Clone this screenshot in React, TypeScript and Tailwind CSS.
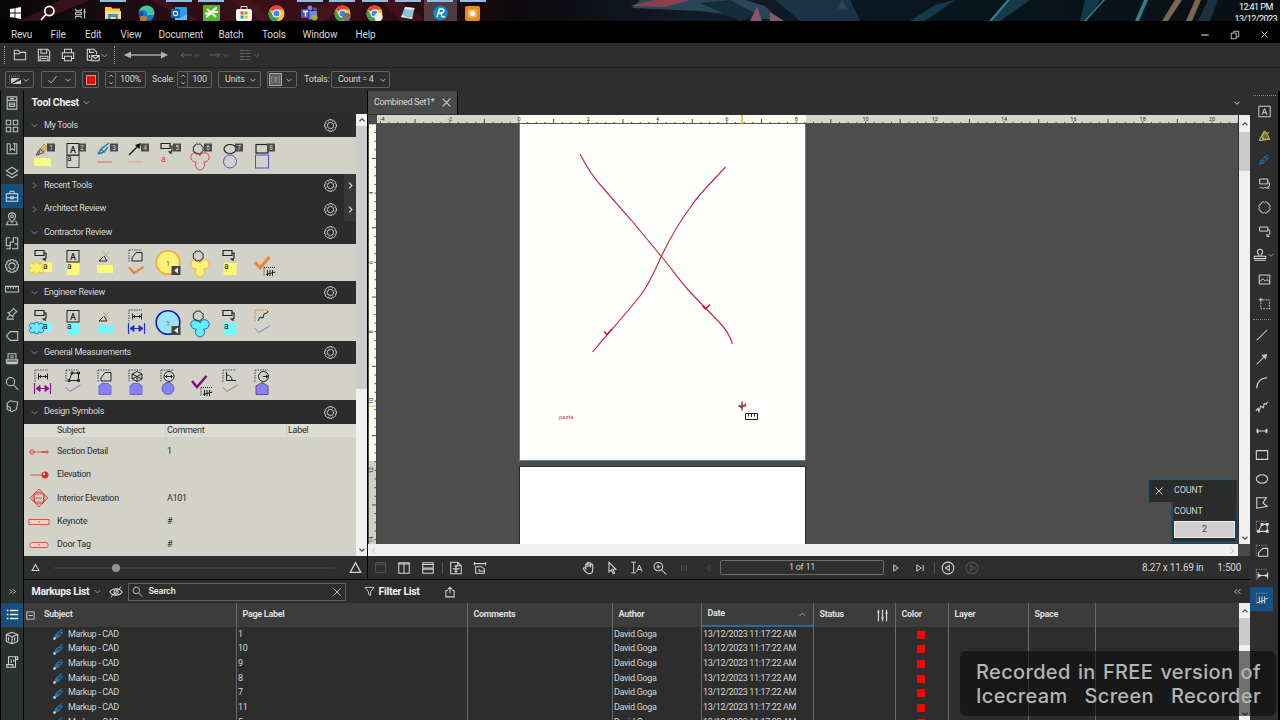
import type { ReactNode } from "react";

type IconProps = { d: string; s?: number; w?: number; c?: string; children?: ReactNode };

function Ic({ d, s = 14, w = 1.2, c = "text-[#d4d4d4]", children }: IconProps) {
  return (
    <svg width={s} height={s} viewBox="0 0 16 16" fill="none" stroke="currentColor" strokeWidth={w} className={`shrink-0 ${c}`}>
      <path d={d} />
      {children}
    </svg>
  );
}

/* Closed ring of n outward bumps around a centre. */
function scallop(cx: number, cy: number, rx: number, ry: number, n: number, bump: number, large = 0, turn = -90) {
  const p = Array.from({ length: n + 1 }, (_, i) => {
    const a = ((turn + (i * 360) / n) * Math.PI) / 180;
    return `${(cx + rx * Math.cos(a)).toFixed(2)} ${(cy + ry * Math.sin(a)).toFixed(2)}`;
  });
  return `M${p[0]}` + p.slice(1).map((q) => `A${bump} ${bump} 0 ${large} 1 ${q}`).join("") + "Z";
}

function gearPath() {
  const n = 8;
  const pts: string[] = [];
  for (let i = 0; i < n; i++) {
    [[-14, 7.4], [14, 7.4], [20, 6.2], [25, 6.2]].forEach(([o, r]) => {
      const a = (((i * 360) / n + o - 90) * Math.PI) / 180;
      pts.push(`${(8 + r * Math.cos(a)).toFixed(2)} ${(8 + r * Math.sin(a)).toFixed(2)}`);
    });
  }
  return "M" + pts.join("L") + "Z";
}

const DOWN = "M3 5.5 8 10.5 13 5.5";
const UP = "M3 10.5 8 5.5 13 10.5";
const RIGHT = "M5.5 3 10.5 8 5.5 13";
const CROSS = "M2.5 2.5 13.5 13.5M13.5 2.5 2.5 13.5";
const PEN = "M2 14 4 8.5 12 2M2 14 7.5 12 13 5M4 8.5 7.5 12M2 14 8 8M9 5 11.5 7.5";

/* ---------- Taskbar ---------- */

function Chrome({ badge }: { badge?: string }) {
  return (
    <svg width="17" height="17" viewBox="0 0 17 17">
      <circle cx="8.5" cy="8.5" r="8" fill="#f7c52d" />
      <path d="M8.5 8.5 1.6 4.5A8 8 0 0 1 15.4 4.5H8.5Z" fill="#e2463a" />
      <path d="M1.6 4.5A8 8 0 0 0 8.5 16.5L12 10.5 8.5 8.5 5 10.5Z" fill="#35a353" />
      <circle cx="8.5" cy="8.5" r="4" fill="#fff" />
      <circle cx="8.5" cy="8.5" r="3" fill="#4285f4" />
      {badge && <circle cx="12.5" cy="12" r="4.2" fill={badge} />}
    </svg>
  );
}

const taskIcons: { el: ReactNode; on?: boolean; active?: boolean }[] = [
  { el: <svg width="11" height="12" viewBox="0 0 11 12" fill="#fff"><path d="M0 2 4.6 1.2V5.6H0ZM5.4 1 11 0V5.6H5.4ZM0 6.4H4.6V10.8L0 10ZM5.4 6.4H11V12L5.4 11Z" /></svg> },
  { el: <Ic d="M14 6A4.6 4.6 0 1 1 4.8 6 4.6 4.6 0 0 1 14 6ZM6 9.5 1 15" s={16} w={1.7} c="text-white" /> },
  { el: <Ic d="M2 2V4.5H9V2M2 14V11.5H9V14M2 6.5H9V9.5H2ZM13 2V14M11.5 6H14.5" s={13} c="text-[#d8d8d8]" /> },
  { on: true, el: <svg width="16" height="14" viewBox="0 0 16 14"><path d="M0 1H6L7.5 2.5H15V13H0Z" fill="#f5c542" /><path d="M0 5H16V13H0Z" fill="#fbdc7c" /><path d="M3 8H13V13H10.5V11H5.5V13H3Z" fill="#3d93d8" /></svg> },
  { el: <svg width="17" height="17" viewBox="0 0 17 17"><circle cx="8.5" cy="8.5" r="8" fill="#1976c8" /><path d="M1 7C2 1 8 0 11 1 16 2.500 17 7 16 10H9C10 8 8 5 5 5 3 5 1.500 6 1 7Z" fill="#3fc7a0" /><path d="M5 8C4 12 7 16 12 15.500 8 18 1 16 1 9 2 6 4.500 6 5 8Z" fill="#134a9c" /><rect x="2" y="11" width="7" height="5" rx="1" fill="#b3793a" /></svg> },
  { on: true, el: <svg width="16" height="15" viewBox="0 0 16 15"><rect x="4" y="1" width="12" height="13" rx="1" fill="#2f9be8" /><path d="M4 8 10 12 16 8V14H4Z" fill="#5fc1f5" /><rect y="3" width="9" height="9" rx="1" fill="#0f62b5" /><circle cx="4.500" cy="7.500" r="2.200" fill="none" stroke="#fff" strokeWidth="1.200" /></svg> },
  { on: true, el: <svg width="17" height="16" viewBox="0 0 17 16"><rect width="17" height="16" rx="1" fill="#57b32c" /><path d="M3 12C7 11 9 4 14 3M4 4 13 12M2 8.500H7M10 7H15" stroke="#fff" strokeWidth="1.800" fill="none" /></svg> },
  { el: <svg width="16" height="17" viewBox="0 0 16 17"><path d="M5 4V1.500H11V4" stroke="#ddd" fill="none" /><rect y="4" width="16" height="12" rx="2" fill="#f4f4f4" /><path d="M4.500 6.500H7.500V9.500H4.500Z" fill="#f25022" /><path d="M8.500 6.500H11.500V9.500H8.500Z" fill="#7fba00" /><path d="M4.500 10.500H7.500V13.500H4.500Z" fill="#00a4ef" /><path d="M8.500 10.500H11.500V13.500H8.500Z" fill="#ffb900" /></svg> },
  { el: <Chrome /> },
  { on: true, el: <svg width="17" height="16" viewBox="0 0 17 16"><circle cx="9" cy="3" r="2.500" fill="#7b83eb" /><circle cx="14" cy="4" r="1.800" fill="#5059c9" /><path d="M5 6H16V11C15 15 7 16 5 11Z" fill="#7b83eb" /><rect y="4" width="9" height="9" rx="1" fill="#4b53bc" /><path d="M2 6.500H7M4.500 6.500V11.500" stroke="#fff" strokeWidth="1.300" /><circle cx="13.500" cy="12.500" r="3" fill="#8cbd18" /></svg> },
  { on: true, el: <Chrome badge="#8a6a62" /> },
  { on: true, el: <Chrome badge="#f1ece4" /> },
  { on: true, el: <svg width="14" height="14" viewBox="0 0 14 14"><path d="M4 1 13.500 2 11 13 0 11Z" fill="#8fc3d8" /><path d="M4 1 13.500 2 13 4 3.500 3Z" fill="#e4eef2" /><path d="M0 11 11 13 11.500 10.500 8 12 1 9Z" fill="#dfe9ec" /></svg> },
  { on: true, active: true, el: <svg width="15" height="16" viewBox="0 0 15 16"><circle cx="7.500" cy="8" r="7.300" fill="#118ac4" /><path d="M4 12 6.500 4H9.500C12 4.500 11 8 8 8H5.500M8 8 9 11.500 12 12" stroke="#fff" strokeWidth="1.500" fill="none" /></svg> },
  { on: true, el: <svg width="15" height="15" viewBox="0 0 15 15"><rect width="15" height="15" rx="2" fill="#e68a1c" /><rect x="3" y="3" width="9" height="9" rx="2" fill="#f7b04f" /><circle cx="7.500" cy="7.500" r="2.500" fill="#fff" /></svg> },
];

function Taskbar() {
  return (
    <div className="relative h-[21px] shrink-0 overflow-hidden bg-[#070c11]">
      <svg className="absolute inset-0" width="1280" height="21" viewBox="0 0 1280 21" preserveAspectRatio="none">
        <defs>
          <linearGradient id="sky" x1="0" x2="1">
            <stop offset="0" stopColor="#080707" /><stop offset=".1" stopColor="#1b0d10" /><stop offset=".2" stopColor="#3a0f18" /><stop offset=".33" stopColor="#2c0c14" />
            <stop offset=".4" stopColor="#0c090c" /><stop offset=".55" stopColor="#121c28" /><stop offset=".75" stopColor="#08151d" /><stop offset="1" stopColor="#0a1014" />
          </linearGradient>
        </defs>
        <rect width="1280" height="21" fill="url(#sky)" />
        <path d="M20 21 60 0H90L40 21ZM150 0 190 21H200L165 0ZM230 0 262 21H275L250 0Z" fill="#4b1a22" opacity=".6" />
        <path d="M300 21 330 0H350L325 21ZM380 0 400 21H425L400 0Z" fill="#571521" opacity=".5" />
        <path d="M640 0 632 8 700 11 780 21 765 6 745 0Z" fill="#2b4658" />
        <path d="M630 6 655 0H690L665 7Z" fill="#8b4050" />
        <path d="M700 3 730 0 760 16 740 21Z" fill="#172c3b" />
        <path d="M750 21 757 7 762 21ZM842 0 848 10 838 9ZM770 12 784 21H770Z" fill="#8a566c" />
        <path d="M775 0 850 0 860 21H800Z" fill="#203a50" opacity=".8" />
        <path d="M935 5 955 0 925 21H910ZM1010 0H1030L1000 21H990ZM1085 0H1100L1087 21H1080Z" fill="#1c536b" opacity=".6" />
        <path d="M1007 0H1010L992 21H989ZM1103 0H1105L1086 21H1084ZM1144 0H1148L1139 21H1135Z" fill="#397c8a" />
        <path d="M1175 0H1182L1168 21H1162ZM1195 0H1201L1192 21H1186Z" fill="#78684f" />
        <path d="M1208 0H1218L1210 21H1198Z" fill="#1d3040" />
      </svg>
      <div className="relative -ml-px flex h-full">
        {taskIcons.map((t, i) => (
          <div key={i} className={`flex h-full w-[32.7px] shrink-0 flex-col items-center ${t.active ? "bg-white/20" : ""}`}>
            <div className={`h-[1.5px] w-[26px] shrink-0 ${t.on ? "bg-[#8fc0e4]" : ""}`} />
            <div className="flex h-[23px] shrink-0 items-center">{t.el}</div>
          </div>
        ))}
        <div className="ml-auto flex flex-col items-center pr-[3px] pt-px text-[9px] leading-[12px] tracking-[-0.55px] text-white">
          <span>12:41 PM</span>
          <span>13/12/2023</span>
        </div>
      </div>
    </div>
  );
}

/* ---------- Menu and toolbars ---------- */

const menus: [string, string][] = [
  ["Revu", "w-[39.5px]"], ["File", "w-[34.5px]"], ["Edit", "w-[35.5px]"], ["View", "w-[38px]"], ["Document", "w-[60px]"],
  ["Batch", "w-[43.5px]"], ["Tools", "w-[40.5px]"], ["Window", "w-[53px]"], ["Help", "w-[40px]"],
];

function MenuBar() {
  return (
    <div className="flex h-[22px] shrink-0 items-center bg-black pb-px pl-[11px] pt-[6px] text-[10px] leading-[15px] tracking-[-0.15px] text-[#d6d6d6]">
      {menus.map(([m, w]) => <span key={m} className={`${w} shrink-0`}>{m}</span>)}
      <div className="ml-auto flex items-center gap-[20px] pr-[11px]">
        <Ic d="M2 8H14" s={10} w={1.8} />
        <Ic d="M2 5H10V14H2ZM6 5V2H14V11H10" s={10} w={1.4} />
        <Ic d={CROSS} s={9} w={1.7} />
      </div>
    </div>
  );
}

const Dots = () => <div className="h-[18px] w-[2px] border-l border-dotted border-[#9a9a9a]" />;

function Toolbar1() {
  return (
    <div className="flex h-[24px] shrink-0 items-center bg-[#2e2e2e] pl-[4px]">
      <Dots />
      <div className="ml-[6.500px] flex items-center gap-[10px]">
        <Ic d="M1.500 13.500V2.500H6L8 5H14.500V13.500ZM1.500 6.500H8" />
        <Ic d="M1.500 1.500H12L14.500 4V14.500H1.500ZM4.500 1.500V6H11V1.500M3.500 14.500V9.500H12.500V14.500M5 12H11" />
        <Ic d="M4 5V1.500H12V5M4 12H1.500V5.500H14.500V12H12M4 9.500H12V14.500H4Z" />
      </div>
      <div className="ml-[11px] flex items-center">
        <Ic d="M6 14H1.500V1.500H9L12 4.500V7M4 1.500V5H9M6.500 8.500H15V14.500H6.500ZM6.500 8.500 10.700 12 15 8.500M4 8V11" />
        <Ic d={DOWN} s={9} />
      </div>
      <div className="ml-[5px]"><Dots /></div>
      <svg className="ml-[8px]" width="44" height="10" viewBox="0 0 44 10"><path d="M5 5H39" stroke="#a5a5a5" strokeWidth="1.400" /><path d="M0 5 7 1.500V8.500ZM44 5 37 1.500V8.500Z" fill="#b4b4b4" /></svg>
      <div className="ml-[11px] flex items-center gap-[7px] text-[#606060]">
        <svg width="22" height="8" viewBox="0 0 22 8" fill="none" stroke="currentColor"><path d="M2 4H13M5 2 2 4 5 6M15.500 3 18 5.500 20.500 3" /></svg>
        <svg width="22" height="8" viewBox="0 0 22 8" fill="none" stroke="currentColor"><path d="M1 4H12M9 2 12 4 9 6M15.500 3 18 5.500 20.500 3" /></svg>
        <svg className="ml-[2px]" width="22" height="12" viewBox="0 0 22 12" fill="none" stroke="currentColor"><path d="M1 1.500H12M1 4.500H12M1 7.500H12M1 10.500H12" strokeDasharray="5 .7" /><path d="M15 5 17.500 7.500 20 5" /></svg>
      </div>
    </div>
  );
}

const box = "flex h-[17px] shrink-0 items-center rounded-[2px] border border-[#626262]";

function Spin() {
  return (
    <div className="flex h-full w-[10px] flex-col items-center justify-between border-r border-[#626262] py-[1px]">
      <Ic d={UP} s={6} w={2} />
      <Ic d={DOWN} s={6} w={2} />
    </div>
  );
}

function Toolbar2() {
  return (
    <div className="flex h-[24px] shrink-0 items-center border-t border-[#1f1f1f] bg-[#2e2e2e] pl-[5px] text-[9px] tracking-[-0.2px] text-[#d4d4d4]">
      <div className={`${box} w-[29px] justify-between px-[3px]`}>
        <svg width="13" height="10" viewBox="0 0 13 10"><path d="M0 1H11M0 2V9" stroke="#8a84a8" strokeDasharray="1 1" /><path d="M2 3H11L2 8.500ZM3 9 12 5V9Z" fill="#c9c9c9" /></svg>
        <Ic d={DOWN} s={8} w={1.600} />
      </div>
      <div className={`${box} ml-[7px] w-[35px] justify-between pl-[5px] pr-[3px]`}>
        <Ic d="M2 9 6 13 14 3" s={11} /><Ic d={DOWN} s={8} w={1.600} />
      </div>
      <div className={`${box} ml-[6px] w-[17px] justify-center`}><div className="h-[10px] w-[10px] border border-[#e98b85] bg-[#f20a0a]" /></div>
      <div className={`${box} ml-[6px] w-[41px]`}><Spin /><span className="flex-1 text-center">100%</span></div>
      <span className="ml-[6px] w-[25px]">Scale:</span>
      <div className={`${box} w-[35px]`}><Spin /><span className="flex-1 text-center">100</span></div>
      <div className={`${box} ml-[6px] w-[43px] justify-between pl-[6px] pr-[3px]`}>Units<Ic d={DOWN} s={8} w={1.600} /></div>
      <div className={`${box} ml-[6px] w-[30px] justify-between pl-[1px] pr-[3px]`}>
        <svg width="13" height="13" viewBox="0 0 13 13" fill="none" stroke="#a8a8a8"><rect x=".5" y=".5" width="12" height="12" fill="#5a5a5a" /><path d="M4 3H2.500V10H4M9 3H10.500V10H9M5 4H8V9H5ZM6.500 4V9" strokeWidth=".8" stroke="#8c8c8c" /></svg>
        <Ic d={DOWN} s={8} w={1.600} />
      </div>
      <span className="ml-[7px] w-[27px]">Totals:</span>
      <div className={`${box} w-[59px] justify-between pl-[6px] pr-[2px] tracking-[-0.300px]`}>Count = 4<Ic d={DOWN} s={8} w={1.600} /></div>
    </div>
  );
}

/* ---------- Left rail ---------- */

const leftIcons: string[] = [
  "M2.500 1H13.500V15H2.500ZM2.500 5H13.500M6 3H10M5 8H11V12H5ZM5 10H11",
  "M1.500 1.500H6.500V6.500H1.500ZM9.500 1.500H14.500V6.500H9.500ZM1.500 9.500H6.500V14.500H1.500ZM9.500 9.500H14.500V14.500H9.500Z",
  "M6 2H2.500V13.500H13.500V2H9M6 2V9.500L8.500 7.500 11 9.500V2",
  "M8 1.500 14.500 5.500 8 9.500 1.500 5.500ZM1.500 9.500 8 13.500 14.500 9.500",
  "M1.500 5.500H14.500V14H1.500ZM5 5.500 6 2.500H10L11 5.500M1.500 10H6M10 10H14.500M6.500 9H9.500V11H6.500Z",
  "M8 12C5 8 4 6.500 4 5A4 4 0 0 1 12 5C12 6.500 11 8 8 12ZM8 3.500A1.500 1.500 0 1 0 8.100 3.500M4 10 1.500 14.500H14.500L12 10",
  "M6 2H1.500V11H6V7H9.500V2H14.500V9M9.500 4.500V7M1.500 14.500H6V11M8 14.500H14.500V9H11",
];
const GEAR = gearPath();
const leftIcons2: string[] = [
  "M.5 5H15.500V11.500H.5ZM3.500 5V8M6.500 5V7M9.500 5V8M12.500 5V7",
  "M9 2 14 7M10 3 6 7 3.500 7.500 9 12.500 9.500 10 13 6.500M6 10 2 14M2 15H10",
  "M14.500 3H6L1.500 8 6 13H14.500Z",
  "M3.500 9V2H12.500V9M1.500 9H14.500V11.500H1.500ZM1.500 13.500H14.500M1.500 12.500H14.500M6 4.500H10M6 6.500H10",
  "M11 6.500A4.700 4.700 0 1 1 1.600 6.500 4.700 4.700 0 0 1 11 6.500ZM9.500 10 15 15.500",
  "M2.500 5 6 2 14.500 3.500 13 12 8 14.500 2.500 12ZM2.500 8 6 9.500V13.500",
];

function LeftRail() {
  const cell = "flex h-[23.35px] shrink-0 items-center justify-center";
  return (
    <div className="flex w-[24px] shrink-0 flex-col border-x border-black bg-[#2b302f]">
      {leftIcons.map((d, i) => (
        <div key={i} className={`${cell} ${i === 4 ? "bg-[#16507a]" : ""}`}><Ic d={d} s={14} c={i === 4 ? "text-[#c4dcea]" : "text-[#c4c4c4]"} /></div>
      ))}
      <div className={cell}><Ic d={GEAR} c="text-[#c4c4c4]"><circle cx="8" cy="8" r="3.600" /></Ic></div>
      {leftIcons2.map((d, i) => <div key={i} className={cell}><Ic d={d} c="text-[#c4c4c4]" /></div>)}
      <div className="mt-[162px] flex h-[23px] shrink-0 items-center justify-center"><Ic d="M3 4 7 8 3 12M9 4 13 8 9 12" s={9} w={1.600} /></div>
      <div className="flex h-[24px] shrink-0 items-center justify-center bg-[#16507a]"><Ic d="M5 3H15M5 8H15M5 13H15M1 3H3M1 8H3M1 13H3" s={13} w={1.700} c="text-white" /></div>
      <div className={cell}><Ic d="M1.500 4 8 1.500 14.500 4V12L8 14.500 1.500 12ZM1.500 4 8 6.500 14.500 4M8 6.500V14.500M4 7V11M11 7V11" /></div>
      <div className={cell}><Ic d="M4 11V2H14.500V5H12M12 2V14H2V11H9V14M7 5V9M10 5V8" /></div>
    </div>
  );
}

/* ---------- Tool chest ---------- */

const Badge = ({ n }: { n: number }) => (
  <g><rect x="21" y="6.500" width="8" height="8" fill="#4c4c4a" /><text x="25" y="13" textAnchor="middle" fontSize="6.500" fill="#d8d8d0" fontFamily="Roboto">{n}</text></g>
);
const Txt = ({ x = 17, y = 25, f = "#111" }: { x?: number; y?: number; f?: string }) => <text x={x} y={y} fontSize="8.500" fill={f} fontFamily="Roboto">a</text>;
const ABox = () => (
  <g><rect x="10" y="6.500" width="12" height="11.500" fill="none" stroke="#222" /><text x="16" y="15.500" textAnchor="middle" fontSize="9" fontWeight="500" fill="#222" fontFamily="Roboto">A</text></g>
);
const CLOUD = scallop(15.2, 12, 4.4, 4.4, 8, 1.75);
const TREFOIL = scallop(17, 23, 4.2, 4, 3, 4.7, 1);
const Callout = () => <path d="M9 6.500H18V11.500H9ZM18 9H20V14L17.500 16M20 16.500 16.500 14.500" fill="none" stroke="#222" strokeWidth="1.200" />;
const Hl = () => <g fill="none"><path d="M10 17 15 12 18 17Z" stroke="#222" /><path d="M14 8 21 15M20 8 14 13" stroke="#c9a85a" /></g>;
const Meas = ({ c = "#777086", children }: { c?: string; children?: ReactNode }) => (
  <g fill="none" stroke="#222"><path d="M9 6H22M9 6V18" stroke={c} strokeWidth="1.500" strokeDasharray="1.500 1" />{children}</g>
);
const DIM = "M12.500 9.500V15.500M21.500 9.500V15.500M13 12.500H21M15 11 13.500 12.500 15 14M19 11 20.500 12.500 19 14";
const BigDim = ({ c }: { c: string }) => <g stroke={c} fill={c}><path d="M8.500 19V30M24.500 19V30M10 24.500H23" fill="none" strokeWidth="1.200" /><path d="M10 24.500 14 21.500V27.500ZM23 24.500 19 21.500V27.500Z" /></g>;
const Tally = () => <g fill="none" stroke="#222"><path d="M18 23.500H29M18 23.500V32" strokeDasharray="1 1" /><path d="M21.500 26V32M24 26V32M26.500 26V32M20 30.500 29.500 28" /></g>;
const Stamp = ({ f, s }: { f: string; s: string }) => (
  <g><circle cx="16" cy="18.500" r="11.800" fill={f} stroke={s} strokeWidth="1.600" /><text x="16" y="21.500" textAnchor="middle" fontSize="7" fill="#555" fontFamily="Roboto">1</text><rect x="19.500" y="22" width="9" height="9" fill="#444" /><path d="M26 23.500V29.500L22 26.500Z" fill="#eee" /></g>
);
const Cloud3 = ({ f, s }: { f: string; s: string }) => <g><path d={TREFOIL} fill={f} stroke={s} /><path d={CLOUD} fill="none" stroke="#222" /></g>;
const PUFF = scallop(10.5, 24, 5, 4, 6, 2.45, 1, -60);
const CloudCall = ({ f, s, g }: { f: string; s: string; g: string }) => (
  <g><rect x="15" y="18" width="11" height="10" rx="2" fill={g} /><path d={PUFF} fill={f} stroke={s} /><Callout /><Txt x={17} y={25} /></g>
);
const ACall = ({ f }: { f: string }) => <g><rect x="10" y="19" width="12.500" height="12" fill={f} /><ABox /><Txt x={10} y={25} /></g>;
const HlBox = ({ f }: { f: string }) => <g><rect x="8" y="21" width="16" height="8" fill={f} /><Hl /></g>;
const Call2 = ({ f }: { f: string }) => <g><rect x="9.500" y="19" width="13" height="12" fill={f} /><Callout /><Txt x={10} y={25} /></g>;
const House = () => <path d="M10 30.500V22L13 19.500H19L22 22V30.500Z" fill="#8583f3" stroke="#6d6ac5" />;
const AREA = "M12 17V14L16 8.500H22V17Z";

const myTools: ReactNode[] = [
  <g><rect x="8" y="21" width="17" height="8" fill="#fbfb84" /><path d="M14 12 18 7 21 10 18 15Z" fill="#d8c060" stroke="#b8a040" /><path d="M10 18 14 12 18 15.500 11 18ZM12 18 14 14" fill="none" stroke="#444" /><Badge n={1} /></g>,
  <g><ABox /><rect x="10" y="18.500" width="12" height="12" fill="none" stroke="#444" /><Txt x={10} y={24} /><Badge n={2} /></g>,
  <g><path d="M9 17 12 12 20 6M9 17 15 15 19 10M12 12 15 15" stroke="#287db5" strokeWidth="1.500" fill="none" /><path d="M8 25H23" stroke="#e07070" strokeWidth="1.200" /><Badge n={3} /></g>,
  <g><path d="M9 18 19 8" stroke="#111" strokeWidth="1.300" /><path d="M21 6 19.500 12 15 8Z" fill="#111" /><path d="M8 25H23" stroke="#e09a92" /><Badge n={4} /></g>,
  <g><Callout /><Txt x={9} y={25} f="#e03030" /><Badge n={5} /></g>,
  <g><path d={TREFOIL} fill="none" stroke="#e04848" /><path d={CLOUD} fill="none" stroke="#222" /><Badge n={6} /></g>,
  <g><ellipse cx="16" cy="12" rx="6" ry="4.500" fill="none" stroke="#222" strokeWidth="1.200" /><circle cx="16" cy="24.500" r="6.500" fill="none" stroke="#5650c8" /><Badge n={7} /></g>,
  <g><rect x="10" y="7.500" width="12" height="8.500" fill="none" stroke="#222" strokeWidth="1.200" /><rect x="9.500" y="18" width="13" height="13" fill="none" stroke="#5650c8" /><Badge n={8} /></g>,
];
const contractor: ReactNode[] = [
  <CloudCall f="#fff06a" s="#e9c53a" g="#fdf87c" />, <ACall f="#fdf972" />, <HlBox f="#fbfb78" />,
  <g><Meas><path d={AREA} /></Meas><path d="M9 23.500 14 29 23.500 23" stroke="#ec8432" strokeWidth="2.200" fill="none" /></g>,
  <Stamp f="#fdf37c" s="#f3a52c" />, <Cloud3 f="#fff07a" s="#f1b63c" />, <Call2 f="#fdf972" />,
  <g><path d="M9 18 14 24 23.500 13" stroke="#f0842a" strokeWidth="3" fill="none" /><Tally /></g>,
];
const engineer: ReactNode[] = [
  <CloudCall f="#6fe8fb" s="#1779bf" g="#7ffafc" />, <ACall f="#73f8fb" />, <HlBox f="#74f8fb" />,
  <g><Meas><path d={DIM} /></Meas><BigDim c="#2530dc" /></g>,
  <Stamp f="#9be3f1" s="#1818b8" />, <Cloud3 f="#62eefb" s="#1672b0" />, <Call2 f="#74f8fb" />,
  <g><Meas c="#e8964a"><path d="M12 17 14 13 17 14 18 10 21 9 22 7" /></Meas><path d="M8.500 24 13 28.500 23.500 22" stroke="#7a72cc" fill="none" /></g>,
];
const general: ReactNode[] = [
  <g><Meas><path d={DIM} /></Meas><BigDim c="#8a1a84" /></g>,
  <g><Meas><path d="M12 16.500 15 9H21.500V16.500ZM11 15.500H13V17.500H11ZM14 8H16V10H14ZM20.500 8H22.500V10H20.500ZM20.500 15.500H22.500V17.500H20.500Z" /></Meas><path d="M8.500 23 13 27.500 23.500 21" stroke="#a06a9a" fill="none" /></g>,
  <g><Meas><path d={AREA} /></Meas><House /></g>,
  <g><Meas><path d="M12 10 17 7.500 22 10V15L17 17.500 12 15ZM12 10 17 12.500 22 10M17 12.500V17.500M12 15 17 12.500 22 15" /></Meas><House /></g>,
  <g><Meas><circle cx="17" cy="12.500" r="5" /><path d="M13.500 12.500H20.500M15 11 13.500 12.500 15 14M19 11 20.500 12.500 19 14" /></Meas><circle cx="16" cy="24.500" r="6" fill="#8583f3" stroke="#7a5ab0" /></g>,
  <g><path d="M9 17 14 23 23.500 12" stroke="#7e1478" strokeWidth="2.600" fill="none" /><Tally /></g>,
  <g><Meas><path d="M12.500 8V16.500H22M12.500 11C16 11 18 13 18 16.500" /></Meas><path d="M8.500 23 13 27.500 23.500 21" stroke="#a06a9a" fill="none" /></g>,
  <g><Meas><circle cx="17.500" cy="12.500" r="5" /><path d="M17 12.500H22M20 11 22 12.500 20 14" /></Meas><path d="M10 30.500V22L16 18.500 22 22V30.500Z" fill="#8583f3" stroke="#7a3f90" /></g>,
];

function GroupHead({ t, open, h, arrow }: { t: string; open?: boolean; h: string; arrow?: boolean }) {
  return (
    <div className={`${h} flex shrink-0 items-center bg-[#2c2c2c] pl-[6px] text-[9px] tracking-[-0.3px] text-[#d8d8d8]`}>
      <Ic d={open ? DOWN : RIGHT} s={9} w={1.400} c="text-[#a8a8a8]" />
      <span className="ml-[5px] flex-1">{t}</span>
      <Ic d={GEAR} s={13} w={1.200} c={arrow ? "mr-[7px] text-[#d0d0d0]" : "mr-[19px] text-[#d0d0d0]"}><circle cx="8" cy="8" r="3.800" /></Ic>
      {arrow && <div className="flex h-full w-[12px] items-center justify-center bg-[#383838]"><Ic d={RIGHT} s={9} w={2} /></div>}
    </div>
  );
}

function ToolRow({ tools, h = "h-[37px]" }: { tools: ReactNode[]; h?: string }) {
  return (
    <div className={`${h} flex shrink-0 overflow-hidden bg-[#d2d2c9] pl-[2px]`}>
      {tools.map((t, i) => (
        <div key={i} className="w-[31.400px] shrink-0"><svg width="31" height="37" viewBox="0 0 31 37">{t}</svg></div>
      ))}
    </div>
  );
}

const symbols: [string, string, ReactNode][] = [
  ["Section Detail", "1", <><circle cx="3" cy="10" r="2.200" /><path d="M1 10H19M12 10 19 9V11Z" /></>],
  ["Elevation", "", <><path d="M1 10H19" /><circle cx="16" cy="10" r="3.200" fill="#e82020" /><path d="M16 10V8A2 2 0 0 0 14 10Z" fill="#fff" stroke="none" /></>],
  ["Interior Elevation", "A101", <><path d="M10 1 19 10 10 19 1 10Z" /><circle cx="10" cy="10" r="6" /><path d="M5.500 6H14.500V14H5.500ZM7 10H13" /></>],
  ["Keynote", "#", <><rect x="0" y="7.500" width="20" height="5" fill="#f4cfc8" /><path d="M9 10H11" /></>],
  ["Door Tag", "#", <><rect x="1" y="7.500" width="18" height="5" rx="2" fill="#f4cfc8" /><path d="M9 10H11" /></>],
];

function ToolChest() {
  return (
    <div className="flex w-[343px] shrink-0 flex-col bg-[#2e2e2e]">
      <div className="flex h-[23px] shrink-0 items-center pl-[7.500px] text-[10.500px] font-bold tracking-[-0.300px] text-[#f0f0f0]">
        Tool Chest <span className="ml-[3px]"><Ic d={DOWN} s={9} /></span>
      </div>
      <div className="flex h-[442px] shrink-0">
        <div className="flex w-[332px] shrink-0 flex-col overflow-hidden">
          <GroupHead t="My Tools" open h="h-[23px]" />
          <ToolRow tools={myTools} />
          <GroupHead t="Recent Tools" h="h-[23px]" arrow />
          <GroupHead t="Architect Review" h="h-[24px]" arrow />
          <GroupHead t="Contractor Review" open h="h-[23px]" />
          <ToolRow tools={contractor} />
          <GroupHead t="Engineer Review" open h="h-[23px]" />
          <ToolRow tools={engineer} />
          <GroupHead t="General Measurements" open h="h-[23px]" />
          <ToolRow tools={general} h="h-[36px]" />
          <GroupHead t="Design Symbols" open h="h-[24px]" />
          <div className="flex-1 bg-[#d2d2c9] text-[9px] tracking-[-0.300px] text-[#2c2c2c]">
            <div className="mb-[3px] grid h-[13px] grid-cols-[33px_108px_121px_1fr] items-center bg-[#dcdcd4]">
              <span /><span>Subject</span>
              <span className="border-l border-[#cfcfc6] pl-[1px]">Comment</span>
              <span className="border-l border-[#cfcfc6] pl-[1px]">Label</span>
            </div>
            {symbols.map(([a, b, g]) => (
              <div key={a} className="grid h-[23.350px] grid-cols-[33px_110px_1fr] items-center">
                <svg className="ml-[5px]" width="20" height="20" viewBox="0 0 20 20" fill="none" stroke="#e05048" overflow="visible">{g}</svg>
                <span>{a}</span><span>{b}</span>
              </div>
            ))}
          </div>
        </div>
        <div className="flex w-[11px] flex-col items-center bg-[#f0f0f0]">
          <div className="flex h-[12px] items-center"><Ic d={UP} s={8} w={2.200} c="text-[#444]" /></div>
          <div className="h-[263px] w-full bg-[#cdcdcd]" />
          <div className="mt-auto flex h-[12px] items-center"><Ic d={DOWN} s={8} w={2.200} c="text-[#444]" /></div>
        </div>
      </div>
      <div className="flex h-[23px] shrink-0 items-center pl-[7px] pr-[5px]">
        <Ic d="M8 2.500 14 13.500H2Z" s={9} w={1.800} />
        <div className="mx-[14px] flex h-[2px] flex-1 items-center bg-[#3c3c3c]"><div className="ml-[58px] h-[8px] w-[8px] rounded-full bg-[#949494]" /></div>
        <Ic d="M8 2 14.500 14H1.500Z" s={13} w={1.500} />
      </div>
    </div>
  );
}

/* ---------- Document ---------- */

const UNIT = 34.65;

function TopRuler() {
  const ticks = Array.from({ length: 100 }, (_, i) => i - 16);
  return (
    <svg className="shrink-0" width="861" height="9" viewBox="0 0 861 9">
      <rect width="861" height="9" fill="#d6d7cb" />
      <rect x="142" width="287" height="9" fill="#fdfdf0" />
      {ticks.map((t) => <path key={t} d={`M${142 + (t * UNIT) / 4} 8.500V${t % 4 === 0 ? (t % 8 === 0 ? 6.5 : 4) : 7}`} stroke="#333" strokeWidth=".9" />)}
      {ticks.filter((t) => t % 8 === 0).map((t) => <text key={t} x={(t === -16 ? 2 : 0) + 142 + (t * UNIT) / 4} y="5.500" textAnchor="middle" fontSize="5.500" fill="#222" fontFamily="Roboto">{t / 4}</text>)}
      <path d="M0 8.500H861" stroke="#555" />
      <path d="M365 0V9" stroke="#f0a822" strokeWidth="1.500" />
    </svg>
  );
}

function SideRuler() {
  const ticks = Array.from({ length: 50 }, (_, i) => i + 8);
  return (
    <svg className="shrink-0" width="9" height="420" viewBox="0 0 9 420">
      <path d="M0 0H1V420H0Z" fill="#4d4d4d" />
      <rect x="1" width="7" height="337" fill="#fdfdf0" />
      <rect x="1" y="337" width="7" height="83" fill="#cfd0c8" />
      <path d="M8.500 0V420" stroke="#444" />
      {ticks.map((t) => <path key={t} d={`M8 ${-69.5 + (t * UNIT) / 4}H${t % 4 === 0 ? (t % 8 === 0 ? 6.5 : 4) : 6.5}`} stroke="#333" strokeWidth=".9" />)}
      {ticks.filter((t) => t % 8 === 0).map((t) => { const y = -69.5 + (t * UNIT) / 4; return <text key={t} x="5" y={y} transform={`rotate(-90 5 ${y})`} textAnchor="middle" fontSize="5.500" fill="#222" fontFamily="Roboto">{t / 4}</text>; })}
      <path d="M1 282H8" stroke="#e6dc5a" strokeWidth="1.500" />
    </svg>
  );
}

function Canvas() {
  return (
    <div className="relative flex h-[420px] w-[861px] flex-col overflow-hidden bg-[#4d4d4d] pl-[142px]">
      <div className="h-[337px] w-[287px] shrink-0 border-x border-b border-[#3f8ba6] bg-[#fffffd]">
        <svg width="285" height="336" viewBox="520 124 285 336" fill="none">
          <path d="M580 154C587 168 593 177 603 188L632 221 661 256C672 269 680 281 690 292L719 322C727 330 730 336 732.500 344" stroke="#c0283c" strokeWidth="1.150" />
          <path d="M725.500 167C710 184 700 193 692 205 680 221 670 238 661 257 655 270 650 283 640 296 626 314 608 333 592.500 352" stroke="#c0283c" strokeWidth="1.150" />
          <path d="M604 331.500 607 334.500 612 329M702.500 306 705.500 309 710 304.500" stroke="#c8142c" strokeWidth="1.500" />
          <text x="559" y="418.500" fontSize="6" fontStyle="italic" fill="#d8303c" fontFamily="Roboto" textLength="14.500">paste</text>
          <path d="M742 401.500V410.500M738 406H746.500" stroke="#702030" strokeWidth="1.200" />
          <path d="M739 405.500 741.500 408 746 403.500" stroke="#c82040" strokeWidth="1.200" />
          <path d="M745.500 413.500H757.500V419.500H745.500ZM748.500 413.500V416.500M751.500 413.500V417M754.500 413.500V416.500" stroke="#222" />
        </svg>
      </div>
      <div className="mt-[5px] h-[80px] w-[287px] shrink-0 border-x border-t-[1.500px] border-[#2a2a2a] bg-white" />
      <div className="absolute bottom-0 right-0 flex w-[90px] flex-col items-end text-[9px] tracking-[-0.200px] text-[#cfcfcf]">
        <div className="flex h-[23px] w-full items-center border border-b-0 border-[#265a72] bg-[#2a2c2b] pl-[5px]">
          <Ic d={CROSS} s={10} w={1.500} /><span className="ml-[10px]">COUNT</span>
        </div>
        <div className="flex h-[42px] w-[67px] flex-col border-b-[3px] border-l-2 border-r-2 border-[#24485a] bg-[#2c2c2c] px-[1px] pt-px">
          <span className="flex h-[17px] items-center">COUNT</span>
          <span className="mt-px flex h-[17px] items-center justify-center border border-[#eee] bg-[#d0d0d0] text-[#444]">2</span>
        </div>
      </div>
    </div>
  );
}

const SCell = ({ children }: { children: ReactNode }) => <div className="flex w-[24px] shrink-0 justify-center">{children}</div>;

function StatusBar() {
  const dim = "text-[#555]";
  return (
    <div className="flex h-[23px] shrink-0 items-center text-[10px] tracking-[-0.250px] text-[#d4d4d4]">
      <SCell><Ic d="M2 2H14V14H2ZM2 4H14" s={13} c={dim} /></SCell>
      <SCell><Ic d="M2 2H14V14H2ZM2 3.500H14M8 3.500V14" /></SCell>
      <SCell><Ic d="M2 2H14V14H2ZM2 4H14M2 8H14M2 9.500H14" /></SCell>
      <div className="mx-[1.500px] h-[12px] w-px bg-[#555]" />
      <SCell><Ic d="M2 1.500H10L14 5.500V14.500H2ZM10 1.500V5.500H14M8 5V13M4.500 9H12M6.500 6.500 8 5 9.500 6.500M6.500 11.500 8 13 9.500 11.500" /></SCell>
      <SCell><Ic d="M1.500 1V5M14.500 1V5M1.500 3H14.500M3 6.500H10L13 9V14H3ZM7 9V11.500H13" /></SCell>
      <div className="w-[84px] shrink-0" />
      <SCell><Ic d="M5 9V4.500A1 1 0 0 1 6.700 4.500V7.500 3A1 1 0 0 1 8.500 3V7.500 3.500A1 1 0 0 1 10.300 3.500V8 5.500A1 1 0 0 1 12.500 5.500V10C12.500 13 11 14.500 8.500 14.500 6 14.500 5 13 2.500 9.500 2 8.500 4 7.500 5 9Z" s={15} /></SCell>
      <SCell><Ic d="M4.500 1.500V12.500L7.300 10 9.300 14.500 11 13.700 9 9.500H12.500Z" /></SCell>
      <SCell><Ic d="M1.500 1.500H7.500M4.500 1.500V14.500M1.500 14.500H7.500M8 13 11.500 5 15 13M9.200 10.500H13.800" s={13} /></SCell>
      <SCell><Ic d="M11 6.500A4.900 4.900 0 1 1 1.200 6.500 4.900 4.900 0 0 1 11 6.500ZM9.700 10 15 15.200M3.800 6.500H8.400M6.100 4.200V8.800" /></SCell>
      <SCell><Ic d="M4 3V13M12 3 6.500 8 12 13Z" s={10} c={dim} /></SCell>
      <SCell><Ic d="M11 3 5 8 11 13Z" s={10} c={dim} /></SCell>
      <div className="flex h-[15px] w-[164px] shrink-0 items-center justify-center rounded-[2px] border border-[#6c6c6c] text-[9px]">1 of 11</div>
      <SCell><Ic d="M4.500 3 11.500 8 4.500 13Z" s={10} w={1.600} /></SCell>
      <SCell><Ic d="M3 3 10 8 3 13ZM13 3V13" s={10} w={1.600} /></SCell>
      <div className="mx-[1.500px] h-[12px] w-px bg-[#555]" />
      <SCell><Ic d="M9.500 5V11L5 8Z"><circle cx="8" cy="8" r="6.700" /></Ic></SCell>
      <SCell><Ic d="M6.500 5V11L11 8Z" c={dim}><circle cx="8" cy="8" r="6.700" /></Ic></SCell>
      <span className="ml-auto">8.27 x 11.69 in</span>
      <span className="ml-[14px] mr-[9px]">1:500</span>
    </div>
  );
}

function DocumentArea() {
  return (
    <div className="flex flex-1 flex-col border-l border-black bg-[#2e2e2e]">
      <div className="flex h-[24px] shrink-0 items-center pb-px">
        <div className="flex h-full w-[90px] items-center justify-between border-r border-black bg-[#4a4a4a] pl-[6px] pr-[5px] text-[9px] tracking-[-0.350px] text-[#dcdcdc]">
          Combined Set1*<Ic d={CROSS} s={11} w={1.500} />
        </div>
        <span className="ml-auto mr-[9px]"><Ic d={DOWN} s={8} w={2} /></span>
      </div>
      <div className="flex h-[429px] shrink-0">
        <div className="flex w-[9px] shrink-0 flex-col"><div className="h-[9px] bg-[#4d4d4d]" /><SideRuler /></div>
        <div className="flex w-[861px] shrink-0 flex-col"><TopRuler /><Canvas /></div>
        <div className="ml-px flex flex-1 flex-col items-center bg-[#f0f0f0]">
          <div className="flex h-[17px] shrink-0 items-center"><Ic d={UP} s={8} w={2.200} c="text-[#444]" /></div>
          <div className="h-[39px] w-full shrink-0 bg-[#cbcbcb]" />
          <div className="mt-auto flex h-[12px] items-center"><Ic d={DOWN} s={8} w={2.200} c="text-[#444]" /></div>
        </div>
      </div>
      <div className="flex h-[12px] shrink-0 items-center bg-[#4a4a4a]">
        <div className="flex h-full w-[870px] items-center justify-between bg-[#f0f0f0] px-[2px]">
          <Ic d="M10.500 3 5.500 8 10.500 13" s={7} w={2} c="text-[#aaa]" /><Ic d={RIGHT} s={7} w={2} c="text-[#aaa]" />
        </div>
      </div>
      <StatusBar />
    </div>
  );
}

/* ---------- Markups list ---------- */

const pages = ["1", "10", "9", "8", "7", "11", "5"];

function Col({ t, w, cells, extra, first, active }: { t: ReactNode; w: string; cells?: ReactNode[]; extra?: ReactNode; first?: boolean; active?: boolean }) {
  return (
    <div className={`${w} shrink-0 ${first ? "" : "border-l border-[#6a6a6a]"}`}>
      <div className={`flex h-[24px] items-center justify-between bg-[#3c3c3c] pr-[6px] text-[9px] font-bold tracking-[-0.300px] text-[#dedede] ${first ? "pl-[2px]" : "pl-[5.500px]"} ${active ? "border-b-2 border-[#2a6a94]" : ""}`}>{t}{extra}</div>
      {cells?.map((c, i) => <div key={i} className="flex h-[14.670px] items-center pl-[1px]">{c}</div>)}
    </div>
  );
}

function MarkupsList() {
  return (
    <div className="flex h-[141px] shrink-0 flex-col overflow-hidden border-t border-black bg-[#2d2d2d]">
      <div className="flex h-[23px] shrink-0 items-center pl-[7.500px] text-[10.500px] font-bold tracking-[-0.300px] text-[#f0f0f0]">
        <span className="w-[60px] shrink-0 whitespace-nowrap">Markups List</span>
        <span className="ml-[1px]"><Ic d={DOWN} s={9} /></span>
        <span className="ml-[7px]"><Ic d="M1 8C4 3 12 3 15 8 12 13 4 13 1 8ZM14 2 2 14M8 5.500A2.500 2.500 0 1 0 8.100 5.500" /></span>
        <div className="ml-[5px] flex h-[18px] w-[218px] items-center border border-[#626262] px-[3px] text-[9px] font-medium tracking-[-0.150px]">
          <Ic d="M11 6.500A4.700 4.700 0 1 1 1.600 6.500 4.700 4.700 0 0 1 11 6.500ZM9.500 10 15 15.500" s={11} />
          <span className="ml-[6px] flex-1">Search</span>
          <Ic d={CROSS} s={10} w={1.400} />
        </div>
        <span className="ml-[18px]"><Ic d="M1.500 2H14.500L9.500 8.500V14L6.500 12V8.500Z" s={11} w={1.300} /></span>
        <span className="ml-[4px] w-[43px] shrink-0 whitespace-nowrap">Filter List</span>
        <span className="ml-[22.500px]"><Ic d="M5 6H2.500V14.500H13.500V6H11M8 10V1.500M5 4.500 8 1.500 11 4.500" s={12} w={1.400} /></span>
        <span className="ml-auto mr-[8px]"><Ic d="M7 4 3 8 7 12M13 4 9 8 13 12" s={9} w={1.700} /></span>
      </div>
      <div className="flex flex-1 overflow-hidden">
        <div className="flex w-[1215px] shrink-0 text-[9px] tracking-[-0.350px] text-[#d6d6d6]">
          <Col first w="w-[212px]" t={<span className="flex items-center gap-[9px]"><Ic d="M1.500 1.500H14.500V14.500H1.500ZM4 8H12" s={9} w={1.600} />Subject</span>}
            cells={pages.map(() => <span className="flex items-center gap-[3px] pl-[28px]"><Ic d={PEN} s={12} w={1.500} c="text-[#2677b0]"><circle cx="2" cy="14" r="1" fill="#ddd" stroke="#ddd" /></Ic>Markup - CAD</span>)} />
          <Col w="w-[231px]" t="Page Label" cells={pages} />
          <Col w="w-[145px]" t="Comments" />
          <Col w="w-[89px]" t="Author" cells={pages.map(() => "David.Goga")} />
          <Col w="w-[112px]" t="Date" active extra={<Ic d={UP} s={9} />} cells={pages.map(() => "13/12/2023 11:17:22 AM")} />
          <Col w="w-[82px]" t="Status" extra={<Ic d="M3 1V15M8 1V15M13 1V15M1.500 4H4.500M6.500 11H9.500M11.500 5H14.500" s={13} w={1.500} />} />
          <Col w="w-[53px]" t="Color" cells={pages.map(() => <span className="ml-[20px] mt-px h-[8px] w-[8px] bg-[#f40606]" />)} />
          <Col w="w-[80px]" t="Layer" />
          <Col w="w-[67px]" t="Space" />
          <Col w="w-[144px]" t="" />
        </div>
        <div className="flex w-[11px] shrink-0 flex-col items-center bg-[#f0f0f0]">
          <div className="flex h-[15px] items-center"><Ic d={UP} s={8} w={2.200} c="text-[#444]" /></div>
          <div className="h-[27px] w-full bg-[#cbcbcb]" />
          <div className="mt-auto flex h-[12px] items-center"><Ic d={DOWN} s={8} w={2.200} c="text-[#444]" /></div>
        </div>
      </div>
    </div>
  );
}

/* ---------- Right rail ---------- */

const upper: { d: string; c?: string; more?: boolean; fill?: string }[] = [
  { d: "M1 1.500H15V14.500H1ZM5 12 8 4.500 11 12M6 9.500H10" },
  { d: "M1.500 14 4 9.500 7.500 13.500ZM4 9.500 8 2M7.500 13.500 15 12.500", c: "text-[#d0d0b0]", fill: "M5 9 9 2.500 14.500 12 8 13ZM9 6 14 4" },
  { d: PEN, c: "text-[#2677b0]" },
  { d: "M2 2.500H12V8.500H2ZM12 5.500 14 7V11L11 13M2 13.500C4 12 5 14.500 7 13.500 9 12 11 14.500 14 13.500" },
  { d: scallop(8, 8, 6, 6, 8, 2.4) },
  { d: "M2 2.500H12V7.500H2ZM12 5 14.500 6.500V11L11 14M11 11V14H14" },
  { d: "M6.500 9V7A3 3 0 1 1 9.500 7V9M1.500 9.500H14.500V12H1.500ZM1.500 14H14.500", more: true },
  { d: "M1.500 2.500H14.500V13.500H1.500ZM1.500 11 6 7 9 10 11 8 14.500 11M11 5H12" },
  { d: "M3.500 1V6M1 3.500H6" },
];
const measure = "M1.500 1.500H14M1.500 1.500V14";
const lower = [
  "M2 14 14 2", "M2 14 12 4M8.500 4 13 3 12 7.500Z", "M2 14C2 7 7 2 14 2", "M1 12.500 3.500 9.500 4.500 13 6.500 7 9.500 9 10.500 4 12.500 5 14.500 2",
  "M2.500 5.500V10.500M13.500 5.500V10.500M2 8H14M4 6.500 2 8 4 9.500M12 6.500 14 8 12 9.500", "M1.500 3H14.500V13H1.500Z",
  "M14.500 8A6.500 4.800 0 1 1 1.500 8 6.500 4.800 0 0 1 14.500 8Z", "M2 2H13L9 8 14 12 2 14Z",
  "M4 13 8 5H14V13ZM3 12H5V14H3ZM7 4H9V6H7ZM13 4H15V6H13ZM13 12H15V14H13Z", "M4 14V10L9 5H14.500V14Z",
  "M3.500 5V12M14.500 5V12M4 8.500H14M6 7 4 8.500 6 10M12 7 14 8.500 12 10", "M5 5V13M8 5V13M11 5V13M2 12 15 7",
];

function RightRail() {
  return (
    <div className="flex w-[30px] shrink-0 flex-col border-r-2 border-black bg-[#2e2e2e]">
      <div className="flex h-[8px] shrink-0 items-center justify-center"><div className="w-[23px] border-t border-dotted border-[#8a8a8a]" /></div>
      {upper.map((u, i) => (
        <div key={i} className={`flex h-[24px] shrink-0 items-center justify-center ${u.more ? "pl-0" : "pl-px"}`}>
          <Ic d={u.d} c={u.c ?? "text-[#d8d8d8]"} s={u.more ? 14 : 13}>
            {u.fill && <path d={u.fill} fill="#6f6c2c" stroke="#bcb74e" />}
            {i === 8 && <path d="M3.500 7V14.500H15M6 3.500H14V14.500" strokeDasharray="2 1.500" />}
          </Ic>
          {u.more && <Ic d={DOWN} s={8} />}
        </div>
      ))}
      <div className="flex h-[8px] shrink-0 items-center pl-[3px]"><div className="w-[18px] border-t border-dotted border-[#8a8a8a]" /></div>
      {lower.map((d, i) => (
        <div key={i} className={`flex h-[24px] w-[23px] shrink-0 items-center justify-center ${i === 11 ? "bg-[#17507e]" : ""}`}>
          <Ic d={d} s={14} c="text-[#d8d8d8]">{i > 7 && <path d={measure} stroke="#8582aa" strokeDasharray="1.500 1.200" />}</Ic>
        </div>
      ))}
    </div>
  );
}

export default function App() {
  return (
    <div className="relative flex h-[720px] w-[1280px] flex-col overflow-hidden bg-[#2e2e2e] font-['Roboto',sans-serif]">
      <Taskbar />
      <MenuBar />
      <Toolbar1 />
      <Toolbar2 />
      <div className="flex min-h-0 flex-1">
        <LeftRail />
        <div className="flex w-[1226px] shrink-0 flex-col">
          <div className="flex h-[488px] shrink-0"><ToolChest /><DocumentArea /></div>
          <MarkupsList />
        </div>
        <RightRail />
      </div>
      <div className="absolute left-[960px] top-[651px] flex h-[65px] w-[316px] flex-col justify-center rounded-[6px] bg-[#080808]/55 pl-[16px] pr-[15px] font-['Inter',sans-serif] text-[20px] font-medium leading-[24px] tracking-[0.350px] text-[#b4b4b4]">
        <div className="flex justify-between"><span>Recorded</span><span>in</span><span>FREE</span><span>version</span><span>of</span></div>
        <div className="flex justify-between"><span>Icecream</span><span>Screen</span><span>Recorder</span></div>
      </div>
    </div>
  );
}
